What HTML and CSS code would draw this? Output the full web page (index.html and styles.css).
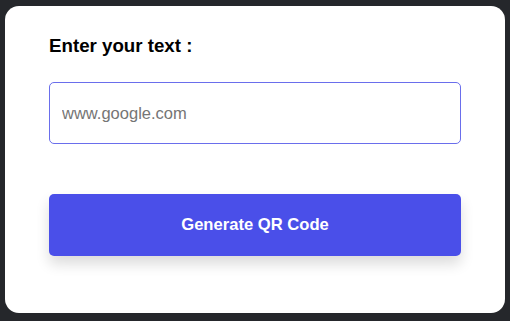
FILE: index.html
```html
<!DOCTYPE html>
<html>
<head>
<meta charset="utf-8">
<link rel="stylesheet" href="styles.css">
</head>
<body>
<div class="card">
  <label class="label" for="txt">Enter your text :</label>
  <input id="txt" class="field" type="text" placeholder="www.google.com">
  <button class="btn">Generate QR Code</button>
</div>
</body>
</html>
```
FILE: styles.css
```css
html, body {
  margin: 0;
  padding: 0;
  background: #25272b;
  width: 510px;
  height: 321px;
  overflow: hidden;
}
body {
  padding: 6px 0 0 5px;
  box-sizing: border-box;
  font-family: "Liberation Sans", Arial, sans-serif;
}
.card {
  width: 500px;
  height: 307px;
  box-sizing: border-box;
  background: #ffffff;
  border-radius: 14px;
  padding: 29px 44px 0 44px;
  display: flex;
  flex-direction: column;
}
.label {
  font-size: 18.72px;
  font-weight: bold;
  color: #000;
  line-height: 22px;
  height: 22px;
  margin-bottom: 25px;
}
.field {
  height: 62px;
  box-sizing: border-box;
  border: 1px solid #6a6eec;
  border-radius: 5px;
  padding: 0 12px;
  font-family: "Liberation Sans", Arial, sans-serif;
  font-size: 16.5px;
  color: #222;
  outline: none;
  margin: 0 0 50px 0;
  width: 412px;
}
.field::placeholder {
  color: #757575;
}
.btn {
  width: 412px;
  height: 62px;
  border: none;
  border-radius: 5px;
  background: #4a4fe9;
  color: #fff;
  font-family: "Liberation Sans", Arial, sans-serif;
  font-weight: bold;
  font-size: 16.6px;
  box-shadow: 0 8px 14px rgba(0, 0, 0, 0.14);
  padding: 0;
}
```
